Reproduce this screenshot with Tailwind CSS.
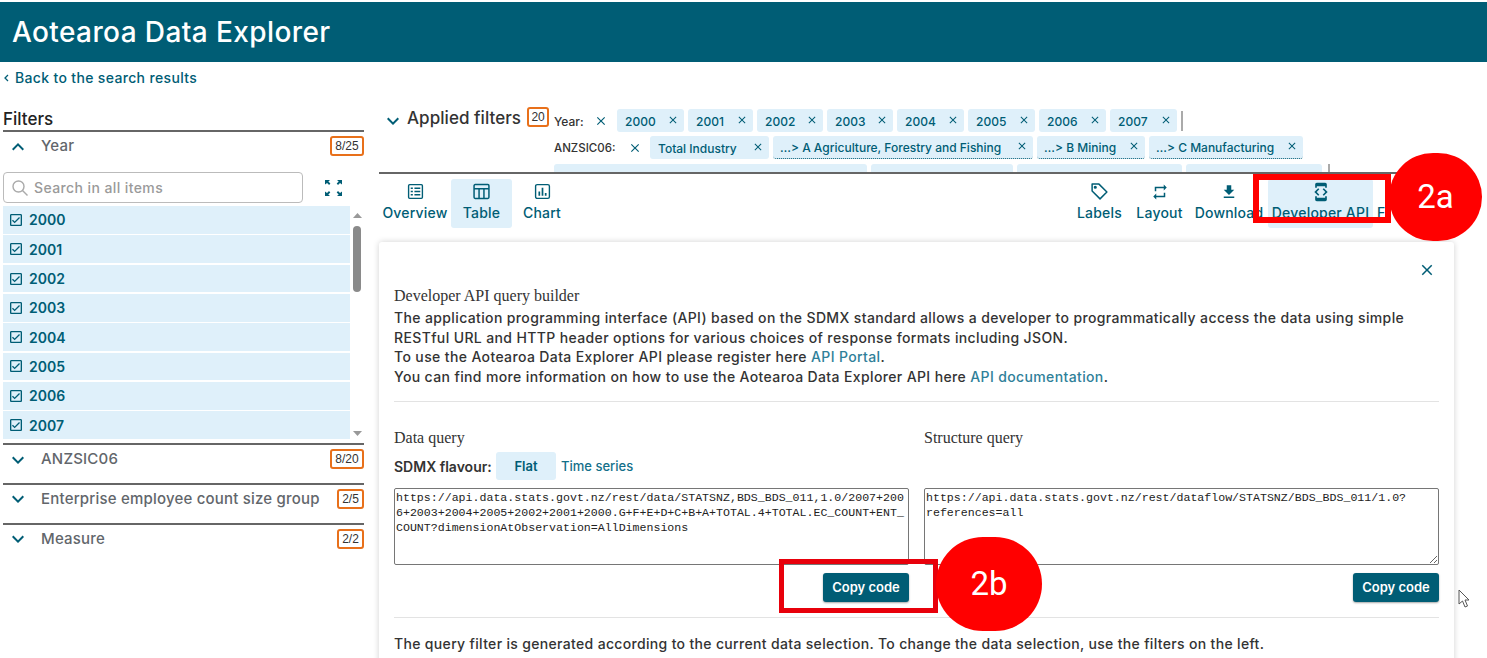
<!doctype html>
<html lang="en">
<head>
<meta charset="utf-8">
<title>Aotearoa Data Explorer</title>
<script src="https://cdn.jsdelivr.net/npm/@tailwindcss/browser@4"></script>
</head>
<body class="relative h-[658px] overflow-hidden bg-white font-['Inter','Noto_Sans',sans-serif] text-[#005d75]">

<!-- icon sprite -->
<svg class="hidden">
  <symbol id="down" viewBox="0 0 24 24"><path fill="currentColor" d="M7.41 8.59 12 13.17l4.59-4.58L18 10l-6 6-6-6z"/></symbol>
  <symbol id="up" viewBox="0 0 24 24"><path fill="currentColor" d="M7.41 15.41 12 10.83l4.59 4.58L18 14l-6-6-6 6z"/></symbol>
  <symbol id="x" viewBox="0 0 24 24"><path fill="currentColor" d="M19 6.41 17.59 5 12 10.59 6.41 5 5 6.41 10.59 12 5 17.59 6.41 19 12 13.41 17.59 19 19 17.59 13.41 12z"/></symbol>
  <symbol id="chk" viewBox="0 0 24 24"><path fill="currentColor" d="M19 3H5c-1.1 0-2 .9-2 2v14c0 1.1.9 2 2 2h14c1.1 0 2-.9 2-2V5c0-1.1-.9-2-2-2zm0 16H5V5h14v14zM17.99 9l-1.41-1.42-6.59 6.59-2.58-2.57-1.42 1.41 4 3.99z"/></symbol>
</svg>

<header class="mt-[2px] flex h-[60px] items-center bg-[#005d75] pl-[12px]">
  <span class="text-[28px] font-medium tracking-[0.4px] text-white">Aotearoa Data Explorer</span>
</header>

<div class="flex">
  <!-- Filters -->
  <aside class="w-[364px] shrink-0 pl-[3px]">
    <a class="mt-[7px] flex h-[17px] items-center gap-[6px] text-[14px] font-medium tracking-[0.34px]">
      <svg class="h-[8px] w-[6px]" viewBox="0 0 6 8"><path d="M5 1 2 4l3 3" fill="none" stroke="currentColor" stroke-width="1.3"/></svg>
      Back to the search results
    </a>
    <h2 class="mt-[22px] h-[22px] text-[17px] leading-[22px] font-medium text-[#222]">Filters</h2>
    <div class="border-t-2 border-[#666]">
      <div class="flex h-[26px] items-center pt-[1px] pl-[3px]">
        <svg class="mt-[2px] h-[24px] w-[24px]"><use href="#up"/></svg>
        <span class="mt-[2px] ml-[11px] text-[15px] font-medium tracking-[0.2px] text-[#62666b]">Year</span>
        <span class="ml-auto flex h-[20px] w-[34px] items-center justify-center rounded-[3px] border-2 border-[#e8701a] font-['Liberation_Sans'] text-[12px] text-[#333]">8/25</span>
      </div>
      <div class="mt-[14px] flex items-center">
        <div class="flex h-[31px] w-[300px] items-center rounded-[4px] border border-[#bbb] pl-[7px] text-[14px] font-medium tracking-[0.4px] text-[#9a9a9a]">
          <svg class="h-[18px] w-[18px]" viewBox="0 0 18 18" fill="none" stroke="#aaa" stroke-width="1.4"><circle cx="7.5" cy="7.5" r="5.5"/><path d="m11.5 11.5 5 5"/></svg>
          <span class="ml-[5px]">Search in all items</span>
        </div>
        <svg class="ml-[21px] h-[18px] w-[19px]" viewBox="0 0 19 18" fill="currentColor"><path d="M1 1h5L4.4 2.6l2 2-1.3 1.300-2-2L1 5.500zM18 1v4.500l-2-1.600-2 2-1.300-1.300 2-2L13 1zM1 17v-4.500l2 1.600 2-2 1.300 1.300-2 2L6 17zM18 17h-5l1.700-1.600-2-2 1.300-1.300 2 2 2-1.600z"/></svg>
      </div>
      <div class="mt-[3px] flex h-[233px]">
        <ul class="flex w-[347px] flex-col gap-[1.500px] text-[14px] font-semibold">
          <li class="flex h-[28px] items-center bg-[#dff0fa] pl-[5px]"><svg class="mr-[5px] h-[16px] w-[16px]"><use href="#chk"/></svg>2000</li>
          <li class="flex h-[28px] items-center bg-[#dff0fa] pl-[5px]"><svg class="mr-[5px] h-[16px] w-[16px]"><use href="#chk"/></svg>2001</li>
          <li class="flex h-[28px] items-center bg-[#dff0fa] pl-[5px]"><svg class="mr-[5px] h-[16px] w-[16px]"><use href="#chk"/></svg>2002</li>
          <li class="flex h-[28px] items-center bg-[#dff0fa] pl-[5px]"><svg class="mr-[5px] h-[16px] w-[16px]"><use href="#chk"/></svg>2003</li>
          <li class="flex h-[28px] items-center bg-[#dff0fa] pl-[5px]"><svg class="mr-[5px] h-[16px] w-[16px]"><use href="#chk"/></svg>2004</li>
          <li class="flex h-[28px] items-center bg-[#dff0fa] pl-[5px]"><svg class="mr-[5px] h-[16px] w-[16px]"><use href="#chk"/></svg>2005</li>
          <li class="flex h-[28px] items-center bg-[#dff0fa] pl-[5px]"><svg class="mr-[5px] h-[16px] w-[16px]"><use href="#chk"/></svg>2006</li>
          <li class="flex h-[28px] items-center bg-[#dff0fa] pl-[5px]"><svg class="mr-[5px] h-[16px] w-[16px]"><use href="#chk"/></svg>2007</li>
        </ul>
        <div class="relative w-[14px]">
          <svg class="absolute top-[7px] left-[3px] h-[5px] w-[9px]" viewBox="0 0 9 5"><path d="M4.500 0 9 5H0z" fill="#999"/></svg>
          <div class="absolute top-[20px] left-[3px] h-[66px] w-[8px] rounded-[4px] bg-[#8a8a8a]"></div>
          <svg class="absolute top-[225px] left-[3px] h-[5px] w-[9px]" viewBox="0 0 9 5"><path d="M4.500 5 9 0H0z" fill="#999"/></svg>
        </div>
      </div>
    </div>
    <div class="mt-[4px] h-[40px] border-t-2 border-[#666]">
      <div class="flex h-[26px] items-center pt-[1px] pl-[3px]">
        <svg class="mt-[2px] h-[24px] w-[24px]"><use href="#down"/></svg>
        <span class="mt-[2px] ml-[11px] text-[15px] font-medium tracking-[0.2px] text-[#62666b]">ANZSIC06</span>
        <span class="ml-auto flex h-[20px] w-[34px] items-center justify-center rounded-[3px] border-2 border-[#e8701a] font-['Liberation_Sans'] text-[12px] text-[#333]">8/20</span>
      </div>
    </div>
    <div class="h-[40px] border-t-2 border-[#666]">
      <div class="flex h-[26px] items-center pt-[2px] pl-[3px]">
        <svg class="h-[24px] w-[24px]"><use href="#down"/></svg>
        <span class="ml-[11px] text-[15px] font-medium tracking-[0.2px] text-[#62666b]">Enterprise employee count size group</span>
        <span class="ml-auto flex h-[20px] w-[27px] items-center justify-center rounded-[3px] border-2 border-[#e8701a] font-['Liberation_Sans'] text-[12px] text-[#333]">2/5</span>
      </div>
    </div>
    <div class="border-t-2 border-[#666]">
      <div class="flex h-[26px] items-center pt-[2px] pl-[3px]">
        <svg class="h-[24px] w-[24px]"><use href="#down"/></svg>
        <span class="ml-[11px] text-[15px] font-medium tracking-[0.2px] text-[#62666b]">Measure</span>
        <span class="ml-auto flex h-[20px] w-[27px] items-center justify-center rounded-[3px] border-2 border-[#e8701a] font-['Liberation_Sans'] text-[12px] text-[#333]">2/2</span>
      </div>
    </div>
  </aside>

  <!-- Main -->
  <main class="ml-[15px] w-[1075px] shrink-0">
    <!-- Applied filters -->
    <div class="mt-[45px] flex h-[65px] overflow-hidden">
      <div class="flex h-[30px] w-[175px] shrink-0 items-start">
        <svg class="mt-[2px] ml-[2px] h-[24px] w-[24px]"><use href="#down"/></svg>
        <span class="ml-[2px] text-[17px] leading-[22px] font-medium tracking-[0.05px] whitespace-nowrap text-[#333]">Applied filters</span>
        <span class="ml-[6px] flex h-[20px] w-[22px] shrink-0 items-center justify-center rounded-[3px] border-2 border-[#e8701a] font-['Liberation_Sans'] text-[12px] text-[#333]">20</span>
      </div>
      <div class="flex flex-col gap-[4px] pt-[2px] text-[12px] font-medium">
        <div class="flex h-[23px] items-center gap-[4px]">
          <span class="w-[35px] pt-[2px] text-[#333]">Year:</span>
          <svg class="mr-[5px] ml-[1px] h-[14px] w-[14px]"><use href="#x"/></svg>
          <span class="flex h-[23px] w-[67px] items-center justify-between rounded-[3px] bg-[#dff0fa] pt-[2px] pr-[5px] pl-[8px]">2000<svg class="mb-[4px] h-[12px] w-[12px]"><use href="#x"/></svg></span>
          <span class="flex h-[23px] w-[65px] items-center justify-between rounded-[3px] bg-[#dff0fa] pt-[2px] pr-[5px] pl-[8px]">2001<svg class="mb-[4px] h-[12px] w-[12px]"><use href="#x"/></svg></span>
          <span class="flex h-[23px] w-[66px] items-center justify-between rounded-[3px] bg-[#dff0fa] pt-[2px] pr-[5px] pl-[8px]">2002<svg class="mb-[4px] h-[12px] w-[12px]"><use href="#x"/></svg></span>
          <span class="flex h-[23px] w-[66px] items-center justify-between rounded-[3px] bg-[#dff0fa] pt-[2px] pr-[5px] pl-[8px]">2003<svg class="mb-[4px] h-[12px] w-[12px]"><use href="#x"/></svg></span>
          <span class="flex h-[23px] w-[67px] items-center justify-between rounded-[3px] bg-[#dff0fa] pt-[2px] pr-[5px] pl-[8px]">2004<svg class="mb-[4px] h-[12px] w-[12px]"><use href="#x"/></svg></span>
          <span class="flex h-[23px] w-[67px] items-center justify-between rounded-[3px] bg-[#dff0fa] pt-[2px] pr-[5px] pl-[8px]">2005<svg class="mb-[4px] h-[12px] w-[12px]"><use href="#x"/></svg></span>
          <span class="flex h-[23px] w-[67px] items-center justify-between rounded-[3px] bg-[#dff0fa] pt-[2px] pr-[5px] pl-[8px]">2006<svg class="mb-[4px] h-[12px] w-[12px]"><use href="#x"/></svg></span>
          <span class="flex h-[23px] w-[67px] items-center justify-between rounded-[3px] bg-[#dff0fa] pt-[2px] pr-[5px] pl-[8px]">2007<svg class="mb-[4px] h-[12px] w-[12px]"><use href="#x"/></svg></span>
          <span class="h-[20px] w-[2px] bg-[#aaa]"></span>
        </div>
        <div class="flex h-[23px] items-center gap-[4px]">
          <span class="w-[62px] pt-[2px] text-[11.500px] text-[#333]">ANZSIC06:</span>
          <svg class="mr-[4px] ml-[8px] h-[14px] w-[14px]"><use href="#x"/></svg>
          <span class="flex h-[23px] w-[119px] items-center justify-between rounded-[3px] bg-[#dff0fa] pt-[2px] pr-[5px] pl-[8px]">Total Industry<svg class="mb-[4px] h-[12px] w-[12px]"><use href="#x"/></svg></span>
          <span class="flex h-[23px] w-[260px] items-center justify-between rounded-[3px] border-b border-dotted border-[#005d75] bg-[#dff0fa] pt-[2px] pr-[5px] pl-[7px]">…&gt; A Agriculture, Forestry and Fishing<svg class="mb-[4px] h-[12px] w-[12px]"><use href="#x"/></svg></span>
          <span class="flex h-[23px] w-[108px] items-center justify-between rounded-[3px] border-b border-dotted border-[#005d75] bg-[#dff0fa] pt-[2px] pr-[5px] pl-[7px]">…&gt; B Mining<svg class="mb-[4px] h-[12px] w-[12px]"><use href="#x"/></svg></span>
          <span class="flex h-[23px] w-[154px] items-center justify-between rounded-[3px] border-b border-dotted border-[#005d75] bg-[#dff0fa] pt-[2px] pr-[5px] pl-[7px]">…&gt; C Manufacturing<svg class="mb-[4px] h-[12px] w-[12px]"><use href="#x"/></svg></span>
        </div>
        <div class="mt-[1px] flex h-[23px] gap-[4px]">
          <span class="h-[23px] w-[313px] rounded-[3px] bg-[#dff0fa]"></span>
          <span class="h-[23px] w-[142px] rounded-[3px] bg-[#dff0fa]"></span>
          <span class="h-[23px] w-[165px] rounded-[3px] bg-[#dff0fa]"></span>
          <span class="h-[23px] w-[136px] rounded-[3px] bg-[#dff0fa]"></span>
          <span class="ml-[2px] h-[20px] w-[2px] bg-[#aaa]"></span>
        </div>
      </div>
    </div>
    <div class="h-[2px] bg-[#666]"></div>

    <!-- Toolbar -->
    <nav class="mt-[5px] flex h-[49px] text-[14px] leading-[16px] font-medium tracking-[0.2px] whitespace-nowrap">
      <a class="ml-[4px] flex w-[64px] flex-col items-center pt-[4px]">
        <svg class="mb-[5px] h-[17px] w-[17px]" viewBox="0 0 16 16" fill="none" stroke="currentColor" stroke-width="1.300"><rect x="1.500" y="1.500" width="13" height="13" rx="1"/><path d="M3.500 5h2M7 5h5.500M3.500 8h2M7 8h5.500M3.500 11h2M7 11h5.500"/></svg>
        Overview
      </a>
      <a class="ml-[4px] flex w-[61px] flex-col items-center rounded-[3px] bg-[#dff0fa] pt-[4px]">
        <svg class="mb-[5px] h-[17px] w-[17px]" viewBox="0 0 16 16" fill="none" stroke="currentColor" stroke-width="1.400"><rect x="1" y="1.500" width="14" height="13" rx="1"/><path d="M1 5.500h14M5.700 5.500v9M10.300 5.500v9"/></svg>
        Table
      </a>
      <a class="ml-[11px] flex w-[38px] flex-col items-center pt-[4px]">
        <svg class="mb-[5px] h-[17px] w-[17px]" viewBox="0 0 16 16" fill="none" stroke="currentColor" stroke-width="1.300"><rect x="1.500" y="1.500" width="13" height="13" rx="1.500"/><path d="M5 12V8M8 12V4.500M11 12V9.500" stroke-width="1.600"/></svg>
        Chart
      </a>
      <a class="ml-[516px] flex w-[45px] flex-col items-center pt-[4px]">
        <svg class="mb-[5px] h-[17px] w-[19px]" viewBox="0 0 18 16" fill="none" stroke="currentColor" stroke-width="1.400"><path d="M2 1h6.500L16 8.500 9.500 15 2 7.500z" stroke-linejoin="round"/><circle cx="5" cy="4" r=".8" fill="currentColor"/></svg>
        Labels
      </a>
      <a class="ml-[14px] flex w-[47px] flex-col items-center pt-[4px]">
        <svg class="mb-[4px] h-[18px] w-[18px]" viewBox="0 0 24 24"><path fill="currentColor" d="M7 7h10v3l4-4-4-4v3H5v6h2V7zm10 10H7v-3l-4 4 4 4v-3h12v-6h-2v4z"/></svg>
        Layout
      </a>
      <a class="ml-[11px] flex w-[70px] flex-col items-center pt-[4px]">
        <svg class="mb-[4px] h-[18px] w-[18px]" viewBox="0 0 24 24"><path fill="currentColor" d="M19 9h-4V3H9v6H5l7 7 7-7zM5 18v2h14v-2H5z"/></svg>
        Download
      </a>
      <a class="ml-[4px] flex w-[105px] flex-col items-center rounded-[3px] bg-[#dff0fa] pt-[3px]">
        <svg class="mb-[3px] h-[20px] w-[20px]" viewBox="0 0 24 24"><path fill="currentColor" d="M7 5h10v2h2V3c0-1.100-.9-1.990-2-1.990L7 1c-1.100 0-2 .9-2 2v4h2V5zm8.410 11.590L20 12l-4.590-4.590L14 8.830 17.170 12 14 15.170l1.410 1.420zM10 15.170 6.830 12 10 8.830 8.590 7.410 4 12l4.590 4.590L10 15.170zM17 19H7v-2H5v4c0 1.100.9 2 2 2h10c1.100 0 2-.9 2-2v-4h-2v2z"/></svg>
        Developer API
      </a>
      <a class="ml-[4px] pt-[26px]">F</a>
    </nav>

    <!-- Developer API panel -->
    <section class="mt-[14px] h-[500px] rounded-[3px] px-[15px] shadow-[0_0_6px_rgba(0,0,0,0.18)]">
      <div class="flex h-[38px] justify-end pt-[19px] pr-[3px]">
        <svg class="h-[18px] w-[18px]"><use href="#x"/></svg>
      </div>
      <h3 class="mt-[6px] font-['Liberation_Serif'] text-[16px] leading-[20px] text-[#333]">Developer API query builder</h3>
      <div class="mt-[2px] text-[14px] leading-[19.600px] font-medium tracking-[0.37px] whitespace-nowrap text-[#333]">
        <p>The application programming interface (API) based on the SDMX standard allows a developer to programmatically access the data using simple<br>RESTful URL and HTTP header options for various choices of response formats including JSON.</p>
        <p>To use the Aotearoa Data Explorer API please register here <a class="text-[#2f8099]">API Portal</a>.</p>
        <p>You can find more information on how to use the Aotearoa Data Explorer API here <a class="text-[#2f8099]">API documentation</a>.</p>
      </div>
      <hr class="mt-[15px] border-[#e3e3e3]">
      <div class="mt-[26px] grid grid-cols-[515px_515px] gap-x-[15px]">
        <div>
          <h3 class="font-['Liberation_Serif'] text-[16px] leading-[20px] text-[#333]">Data query</h3>
          <div class="mt-[4px] flex h-[28px] items-center text-[13px] font-medium">
            <span class="w-[102px] text-[14px] font-semibold text-[#333]">SDMX flavour:</span>
            <span class="flex h-[28px] w-[60px] items-center justify-center rounded-[3px] bg-[#dff0fa] font-semibold">Flat</span>
            <span class="ml-[5px] text-[#13708a]">Time series</span>
          </div>
          <textarea readonly class="mt-[8px] block h-[77px] w-[515px] resize-none rounded-[2px] border border-[#767676] px-[1px] py-[1px] font-['Liberation_Mono'] text-[11.600px] leading-[15px] break-all text-[#222]">https://api.data.stats.govt.nz/rest/data/STATSNZ,BDS_BDS_011,1.0/2007+2006+2003+2004+2005+2002+2001+2000.G+F+E+D+C+B+A+TOTAL.4+TOTAL.EC_COUNT+ENT_COUNT?dimensionAtObservation=AllDimensions</textarea>
          <div class="mt-[8px] flex justify-end">
            <button class="h-[29px] w-[86px] rounded-[3px] bg-[#005d75] text-[13px] font-semibold text-white shadow-[0_1px_2px_rgba(0,0,0,0.35)]">Copy code</button>
          </div>
        </div>
        <div>
          <h3 class="font-['Liberation_Serif'] text-[16px] leading-[20px] text-[#333]">Structure query</h3>
          <div class="mt-[4px] h-[28px]"></div>
          <textarea readonly class="mt-[8px] block h-[77px] w-[515px] rounded-[2px] border border-[#767676] px-[1px] py-[1px] font-['Liberation_Mono'] text-[11.600px] leading-[15px] text-[#222]">https://api.data.stats.govt.nz/rest/dataflow/STATSNZ/BDS_BDS_011/1.0?references=all</textarea>
          <div class="mt-[8px] flex justify-end">
            <button class="h-[29px] w-[86px] rounded-[3px] bg-[#005d75] text-[13px] font-semibold text-white shadow-[0_1px_2px_rgba(0,0,0,0.35)]">Copy code</button>
          </div>
        </div>
      </div>
      <hr class="mt-[15px] border-[#e3e3e3]">
      <p class="mt-[16px] text-[14px] leading-[19px] font-medium tracking-[0.33px] whitespace-nowrap text-[#333]">The query filter is generated according to the current data selection. To change the data selection, use the filters on the left.</p>
    </section>
  </main>
</div>

<!-- Annotations over the screenshot -->
<div class="absolute top-[174px] left-[1253px] h-[49px] w-[138px] border-[6px] border-[#ff0000]"></div>
<div class="absolute top-[153px] left-[1389px] flex h-[88px] w-[93px] items-center justify-center rounded-full bg-[#ff0000] font-['Roboto'] text-[33px] text-white">2a</div>
<div class="absolute top-[559px] left-[779px] h-[54px] w-[159px] border-[5px] border-[#e8000b]"></div>
<div class="absolute top-[537px] left-[936px] flex h-[94px] w-[106px] items-center justify-center rounded-full bg-[#ff0000] font-['Roboto'] text-[33px] text-white">2b</div>
<svg class="absolute top-[589px] left-[1458px] h-[19px] w-[13px]" viewBox="0 0 13 19"><path d="M1 1v14l3.500-3 2.500 6 2.500-1-2.500-6H11z" fill="#fff" stroke="#555"/></svg>
</body>
</html>
